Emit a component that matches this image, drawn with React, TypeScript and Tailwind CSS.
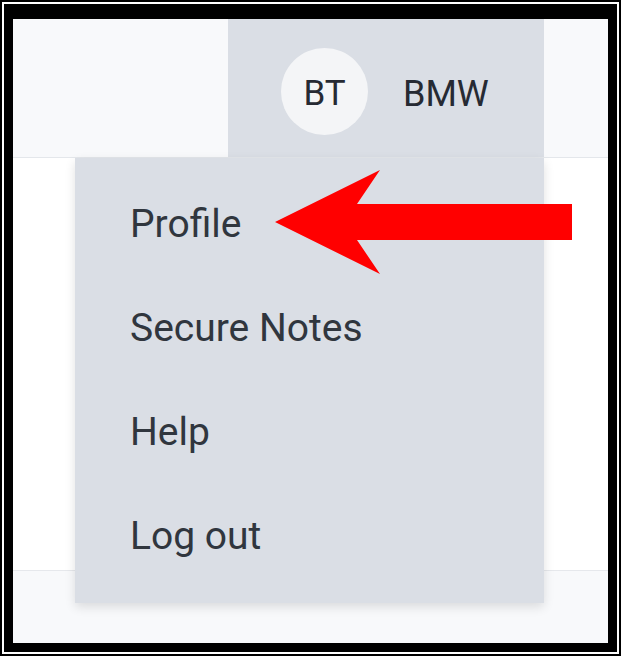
import React from 'react';

const menuItems = ['Profile', 'Secure Notes', 'Help', 'Log out'];

function Arrow() {
  return (
    <svg
      className="absolute left-[262px] top-[151px] pointer-events-none"
      width="300"
      height="106"
      viewBox="0 0 300 106"
    >
      <polygon
        points="0,52 105,0 82,34 297,34 297,70 82,70 105,104"
        fill="#ff0000"
      />
    </svg>
  );
}

export default function App() {
  return (
    <div
      className="w-[621px] h-[656px] bg-black p-[2px]"
      style={{ fontFamily: 'Roboto, "Noto Sans", sans-serif' }}
    >
      <div className="w-full h-full bg-white p-[2px]">
        <div className="w-full h-full bg-black pt-[15px] px-[9px] pb-[9px]">
          {/* page */}
          <div className="relative w-full h-full bg-white flex flex-col overflow-hidden shadow-[inset_0_0_6px_rgba(0,0,0,0.6)]">
            {/* header */}
            <header className="h-[139px] flex shrink-0 border-b border-[#e4e7eb]">
              <div className="w-[215px] bg-[#f8f9fb]" />
              <div className="w-[316px] bg-[#dadee5] flex items-center pt-[7px] pl-[53px] gap-[35px]">
                <div className="w-[87px] h-[87px] rounded-full bg-[#f4f5f7] flex items-center justify-center pt-[4px] leading-none text-[35px] text-[#262a33]">
                  BT
                </div>
                <span className="text-[36px] leading-none pt-[4px] text-[#262a33]">BMW</span>
              </div>
              <div className="flex-1 bg-[#f8f9fb]" />
            </header>

            <main className="flex-1 bg-white" />

            <footer className="h-[73px] shrink-0 bg-[#f8f9fb] border-t border-[#e6e8ec]" />

            {/* dropdown menu */}
            <div className="absolute left-[62px] top-[139px] w-[469px] h-[445px] bg-[#dadee5] py-[14px] shadow-[0_4px_10px_rgba(0,0,0,0.12)]">
              {menuItems.map((item) => (
                <div
                  key={item}
                  className="h-[104px] flex items-center pl-[55px] text-[39px] text-[#30363e]"
                >
                  {item}
                </div>
              ))}
            </div>

            <Arrow />
          </div>
        </div>
      </div>
    </div>
  );
}
